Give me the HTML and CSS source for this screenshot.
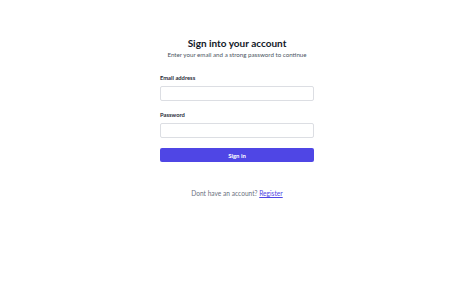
FILE: index.html
```html
<!DOCTYPE html>
<html>
<head>
<meta charset="utf-8">
<link rel="stylesheet" href="styles.css">
</head>
<body>
<main class="page">
  <div class="header">
    <h1 class="title">Sign into your account</h1>
    <p class="subtitle">Enter your email and a strong password to continue</p>
  </div>
  <form class="form">
    <div class="field">
      <label class="label">Email address</label>
      <input class="input" type="email">
    </div>
    <div class="field">
      <label class="label">Password</label>
      <input class="input" type="password">
    </div>
    <button class="button" type="button">Sign in</button>
  </form>
  <p class="footer">Dont have an account? <a class="link" href="#">Register</a></p>
</main>
</body>
</html>
```
FILE: styles.css
```css
html, body {
  margin: 0;
  padding: 0;
  background: #ffffff;
}
body {
  font-family: Lato, "Open Sans", sans-serif;
  color: #111827;
}
.page {
  width: 154px;
  margin: 0 auto;
  padding-top: 36px;
  display: flex;
  flex-direction: column;
}
.header {
  text-align: center;
}
.title {
  margin: 0;
  font-size: 10px;
  line-height: 14px;
  font-weight: 700;
  color: #111827;
  white-space: nowrap;
}
.subtitle {
  margin: 0;
  font-size: 6.2px;
  line-height: 9px;
  color: #4b5563;
  white-space: nowrap;
}
.form {
  margin-top: 15px;
  display: flex;
  flex-direction: column;
  gap: 10px;
}
.field {
  display: flex;
  flex-direction: column;
  gap: 4px;
}
.label {
  font-size: 5.8px;
  line-height: 8px;
  font-weight: 700;
  color: #1f2937;
}
.input {
  box-sizing: border-box;
  width: 154px;
  height: 15px;
  margin: 0;
  border: 1px solid #dcdee3;
  border-radius: 2px;
  background: #fff;
  padding: 0 4px;
}
.button {
  box-sizing: border-box;
  width: 154px;
  height: 14px;
  margin: 0;
  border: none;
  border-radius: 2px;
  background: #4f46e5;
  color: #fff;
  font-family: inherit;
  font-size: 6px;
  font-weight: 700;
  padding: 0;
}
.footer {
  margin: 27px 0 0;
  text-align: center;
  font-size: 6.6px;
  line-height: 9px;
  color: #6b7280;
  white-space: nowrap;
}
.link {
  color: #4f46e5;
  text-decoration: underline;
}
```
